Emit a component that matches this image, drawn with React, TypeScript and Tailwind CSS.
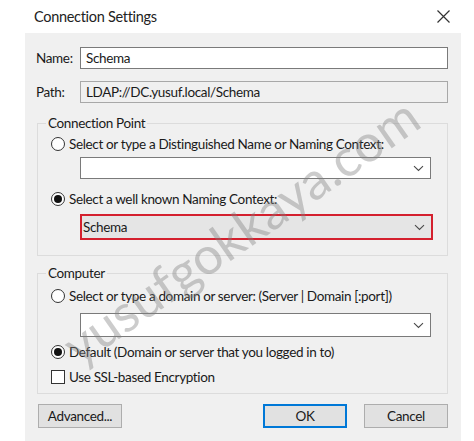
import React from "react";

const font = { fontFamily: 'Lato, "Noto Sans", Arial, sans-serif' };

const Chevron = () => (
  <svg width="11" height="7" viewBox="0 0 11 7" className="mr-[6px]">
    <path d="M1 1.2 L5.5 5.5 L10 1.2" fill="none" stroke="#4a4a4a" strokeWidth="1.1" />
  </svg>
);

const Radio = ({ checked, label }: { checked?: boolean; label: string }) => (
  <div className="flex h-[18px] items-center">
    <span className="flex h-[14px] w-[14px] items-center justify-center rounded-full border border-[#333] bg-white">
      {checked && <span className="h-[8px] w-[8px] rounded-full bg-[#111]" />}
    </span>
    <span className="ml-[4px] whitespace-nowrap">{label}</span>
  </div>
);

const Combo = ({ h = "h-[22px]" }: { h?: string }) => (
  <div className={`ml-[29px] mr-[16px] flex ${h} items-center justify-end border border-[#7a7a7a] bg-white`}>
    <Chevron />
  </div>
);

export default function App() {
  return (
    <div
      style={font}
      className="relative flex h-[441px] w-[474px] flex-col overflow-hidden bg-white text-[13.5px] tracking-[-0.35px] text-[#1a1a1a]"
    >
      <div className="flex h-[33px] items-center justify-between pl-[34px] pr-[24px]">
        <span className="text-[14.5px] tracking-[-0.3px] text-[#222]">Connection Settings</span>
        <svg width="13" height="13" viewBox="0 0 13 13">
          <path d="M0.5 0.5 L12.5 12.5 M12.5 0.5 L0.5 12.5" stroke="#333" strokeWidth="1.2" />
        </svg>
      </div>

      <div className="ml-[25px] flex w-[436px] flex-1 flex-col bg-[#f0f0f0] pr-[13px] pt-[14px]">
        <div className="flex h-[22px] items-center pl-[11px]">
          <span className="w-[44px]">Name:</span>
          <div className="flex h-full flex-1 items-center border border-[#7a7a7a] bg-white pl-[5px]">Schema</div>
        </div>
        <div className="mt-[12px] flex h-[22px] items-center pl-[11px]">
          <span className="w-[44px]">Path:</span>
          <div className="flex h-full flex-1 items-center border border-[#a8a8a8] bg-[#f0f0f0] pl-[5px]">
            LDAP://DC.yusuf.local/Schema
          </div>
        </div>

        <fieldset className="ml-[12px] mt-[12px] border border-[#dcdcdc]">
          <legend className="ml-[8px] px-[2px] leading-[16px]">Connection Point</legend>
          <div className="pb-[15px] pl-[13px] pt-[4px]">
            <Radio label="Select or type a Distinguished Name or Naming Context:" />
            <div className="mt-[4px]">
              <Combo />
            </div>
            <div className="mt-[11px]">
              <Radio checked label="Select a well known Naming Context:" />
            </div>
            <div className="ml-[29px] mr-[14px] mt-[6px] h-[26px] border-2 border-[#d4202e]">
              <div className="flex h-full items-center justify-between bg-[#e5e5e5] pl-[1px]">
                <span>Schema</span>
                <Chevron />
              </div>
            </div>
          </div>
        </fieldset>

        <fieldset className="ml-[12px] mt-[9px] border border-[#dcdcdc]">
          <legend className="ml-[8px] px-[2px] leading-[16px]">Computer</legend>
          <div className="pb-[7px] pl-[13px] pt-[6px]">
            <Radio label="Select or type a domain or server: (Server | Domain [:port])" />
            <div className="mt-[8px]">
              <Combo h="h-[24px]" />
            </div>
            <div className="mt-[6px]">
              <Radio checked label="Default (Domain or server that you logged in to)" />
            </div>
            <div className="mt-[7px] flex h-[18px] items-center">
              <span className="h-[14px] w-[14px] border border-[#333] bg-white" />
              <span className="ml-[4px]">Use SSL-based Encryption</span>
            </div>
          </div>
        </fieldset>

        <div className="ml-[13px] mt-[10px] flex items-center justify-between">
          <button className="flex h-[24px] w-[84px] items-center justify-center border border-[#adadad] bg-[#e1e1e1]">
            Advanced...
          </button>
          <div className="flex gap-[17px]">
            <button className="flex h-[24px] w-[84px] items-center justify-center border-2 border-[#0078d7] bg-[#e1e1e1]">
              OK
            </button>
            <button className="flex h-[24px] w-[84px] items-center justify-center border border-[#adadad] bg-[#e1e1e1]">
              Cancel
            </button>
          </div>
        </div>
      </div>

      {/* site watermark across the dialog */}
      <span className="pointer-events-none absolute left-[240px] top-[230px] -translate-x-1/2 -translate-y-1/2 -rotate-[35deg] whitespace-nowrap text-[52px] tracking-normal text-[#808080]/40">
        yusufgokkaya.com
      </span>
    </div>
  );
}
